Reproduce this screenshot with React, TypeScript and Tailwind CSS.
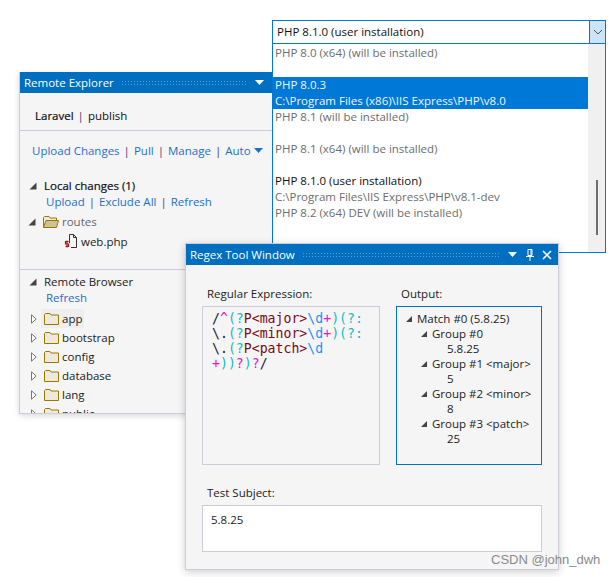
import React from "react";

const sans = "font-['Open_Sans','Noto_Sans',sans-serif]";

function Expanded({ className = "" }: { className?: string }) {
  return (
    <svg width="8" height="8" viewBox="0 0 8 8" className={"shrink-0 " + className}>
      <path d="M7.5 0.5V7.5H0.5Z" fill="#444" />
    </svg>
  );
}

function Collapsed() {
  return (
    <svg width="6" height="10" viewBox="0 0 6 10" className="shrink-0">
      <path d="M0.5 0.8L5.2 5L0.5 9.2Z" fill="#fff" stroke="#777" />
    </svg>
  );
}

function Folder({ fill = "#efe9dc", stroke = "#9a7800" }: { fill?: string; stroke?: string }) {
  return (
    <svg width="15" height="12" viewBox="0 0 15 12" className="shrink-0">
      <path d="M0.5 11.5V1.5L1.5 0.5H6L7 2H14.5V11.5Z" fill={fill} stroke={stroke} />
    </svg>
  );
}

function OpenFolder() {
  return (
    <svg width="16" height="12" viewBox="0 0 16 12" className="shrink-0">
      <path d="M0.5 11.5V1.5L1.5 0.5H6L7 2H13.5V4" fill="#efe9dc" stroke="#9a7800" />
      <path d="M0.5 11.5L3 4.5H15.5L13.5 11.5Z" fill="#cfc298" stroke="#9a7800" />
    </svg>
  );
}

function PhpFile() {
  return (
    <svg width="13" height="15" viewBox="0 0 13 15" className="shrink-0">
      <path d="M5.5 9V0.5H9.5L12.5 3.5V13.5H7" fill="#f5f5f5" stroke="#333" />
      <path d="M9.5 0.5V3.5H12.5" fill="none" stroke="#333" />
      <path d="M4.5 7.5H1.5V10H4.5V12.5H1.5M3 6.5V13.5" fill="none" stroke="#b01010" strokeWidth="1.2" />
    </svg>
  );
}

function Sep() {
  return <span className="text-[#4a3a78] mx-[4px]">|</span>;
}

function Link({ children }: { children: React.ReactNode }) {
  return <span className="text-[#1e6fc8]">{children}</span>;
}

function TitleDots() {
  return (
    <div className="flex-1 h-[6px] mx-[7px] bg-[image:radial-gradient(#5f9fd6_0.7px,transparent_0.8px)] bg-[size:3px_3px]" />
  );
}

function Row({ children, gray = false, sel = false, black = false }: { children?: React.ReactNode; gray?: boolean; sel?: boolean; black?: boolean }) {
  return (
    <div
      className={
        "h-[16px] leading-[16px] pl-[2px] whitespace-nowrap " +
        (sel ? "bg-[#0078d7] text-[#f0f6fc]" : black ? "text-[#111]" : gray ? "text-[#6d6d6d]" : "")
      }
    >
      {children}
    </div>
  );
}

function Tree({ name, hover = false }: { name: string; hover?: boolean }) {
  return (
    <div className="h-[19px] flex items-center pl-[11px] text-[#222]">
      <Collapsed />
      <span className={"ml-[4px] pl-[3px] flex items-center h-[19px] pr-[2px] " + (hover ? "bg-[#eeeeee]" : "")}>
        <span className="mr-[3px] flex items-center">
          <Folder />
        </span>
        <span>{name}</span>
      </span>
    </div>
  );
}

function OutNode({ label, value }: { label: string; value: string }) {
  return (
    <>
      <div className="h-[15px] flex items-center pl-[23px]">
        <Expanded className="scale-[0.85]" />
        <span className="ml-[4px]">{label}</span>
      </div>
      <div className="h-[15px] leading-[15px] pl-[50px]">{value}</div>
    </>
  );
}

const C = ({ c, children }: { c: string; children: React.ReactNode }) => <span style={{ color: c }}>{children}</span>;
const cy = "#12bcc4";
const re = "#7a0a14";
const bl = "#1e90ff";
const ma = "#ee11c8";
const dk = "#202040";

export default function App() {
  return (
    <div className={"relative w-[615px] h-[577px] bg-white overflow-hidden text-[11.5px] " + sans}>
      {/* Remote Explorer */}
      <div className="absolute left-[19px] top-[72px] w-[253px] h-[342px] bg-[#f5f5f5] border-b border-l border-[#ccccdb] shadow-[0_2px_6px_rgba(0,0,0,0.15)] flex flex-col overflow-hidden">
        <div className="h-[21px] shrink-0 bg-[#006fc0] text-white flex items-center pl-[4px] pr-[8px]">
          <span>Remote Explorer</span>
          <TitleDots />
          <svg width="9" height="5" viewBox="0 0 9 5"><path d="M0 0H9L4.5 5Z" fill="#fff" /></svg>
        </div>
        <div className="h-[38px] shrink-0 border-b border-[#ccccdb] pt-[14px] pl-[15px] leading-[17px] text-[#111]">
          <span className="[-webkit-text-stroke:0.2px_#111]">Laravel</span>
          <Sep />
          <span>publish</span>
        </div>
        <div className="pt-[11px] pl-[12px] leading-[17px] h-[41px] shrink-0 whitespace-nowrap">
          <Link>Upload Changes</Link>
          <Sep />
          <Link>Pull</Link>
          <Sep />
          <Link>Manage</Link>
          <Sep />
          <Link>Auto</Link>
          <svg width="9" height="5" viewBox="0 0 9 5" className="inline ml-[3px] mb-[2px]"><path d="M0 0H9L4.5 5Z" fill="#1e6fc8" /></svg>
        </div>
        <div className="h-[16px] pl-[9px] flex items-center shrink-0 mt-[6px] text-[#111]">
          <Expanded />
          <span className="ml-[7px] [-webkit-text-stroke:0.2px_#111]">Local changes (1)</span>
        </div>
        <div className="h-[16px] leading-[15px] pl-[26px] shrink-0 whitespace-nowrap">
          <Link>Upload</Link>
          <Sep />
          <Link>Exclude All</Link>
          <Sep />
          <Link>Refresh</Link>
        </div>
        <div className="h-[20px] pl-[8px] flex items-center shrink-0 mt-[2px] text-[#666]">
          <Expanded />
          <span className="ml-[7px] mr-[3px]"><OpenFolder /></span>
          <span>routes</span>
        </div>
        <div className="h-[19px] pl-[44px] flex items-center shrink-0 text-[#222]">
          <PhpFile />
          <span className="ml-[4px]">web.php</span>
        </div>
        <div className="h-[19px] shrink-0 border-b border-[#ccccdb]" />
        <div className="h-[16px] pl-[9px] flex items-center shrink-0 mt-[4px] text-[#222]">
          <Expanded />
          <span className="ml-[7px]">Remote Browser</span>
        </div>
        <div className="h-[16px] leading-[15px] pl-[26px] shrink-0 mb-[3px]">
          <Link>Refresh</Link>
        </div>
        <Tree name="app" hover />
        <Tree name="bootstrap" />
        <Tree name="config" />
        <Tree name="database" />
        <Tree name="lang" />
        <Tree name="public" />
      </div>

      {/* PHP dropdown */}
      <div className="absolute left-[272px] top-[20px] w-[334px] h-[233px] bg-white border-x border-b border-[#0078d7] flex flex-col">
        <div className="h-[24px] -mx-px shrink-0 border border-[#0078d7] flex">
          <div className="flex-1 pl-[4px] leading-[21px] text-[#111]">PHP 8.1.0 (user installation)</div>
          <div className="w-[16px] border-l border-[#0078d7] bg-[#cce4f7] flex items-center justify-center">
            <svg width="10" height="6" viewBox="0 0 10 6"><path d="M1 1L5 5L9 1" fill="none" stroke="#555" /></svg>
          </div>
        </div>
        <div className="flex flex-1 min-h-0">
          <div className="flex-1 pt-[1px]">
            <Row gray>PHP 8.0 (x64) (will be installed)</Row>
            <Row />
            <Row sel>PHP 8.0.3</Row>
            <Row sel>C:\Program Files (x86)\IIS Express\PHP\v8.0</Row>
            <Row gray>PHP 8.1 (will be installed)</Row>
            <Row />
            <Row gray>PHP 8.1 (x64) (will be installed)</Row>
            <Row />
            <Row black>PHP 8.1.0 (user installation)</Row>
            <Row gray>C:\Program Files\IIS Express\PHP\v8.1-dev</Row>
            <Row gray>PHP 8.2 (x64) DEV (will be installed)</Row>
          </div>
          <div className="w-[17px] shrink-0 bg-[#f0f0f0] flex justify-center pt-[136px]">
            <div className="w-[2px] h-[55px] bg-[#6e6e6e]" />
          </div>
        </div>
      </div>

      {/* Regex window */}
      <div className="absolute left-[185px] top-[243px] w-[374px] h-[327px] bg-[#f5f5f5] border border-[#ccccdb] shadow-[0_2px_8px_rgba(0,0,0,0.2)] flex flex-col">
        <div className="h-[21px] shrink-0 bg-[#006fc0] text-white flex items-center pl-[4px] pr-[6px]">
          <span>Regex Tool Window</span>
          <TitleDots />
          <svg width="9" height="5" viewBox="0 0 9 5" className="mr-[8px]"><path d="M0 0H9L4.5 5Z" fill="#fff" /></svg>
          <svg width="10" height="12" viewBox="0 0 10 12" className="mr-[7px]"><path d="M3 0.5H7V6.5H3ZM1 7.5H9M5 7.5V12M6 1V6" fill="none" stroke="#fff" /></svg>
          <svg width="10" height="10" viewBox="0 0 10 10"><path d="M1 1L9 9M9 1L1 9" fill="none" stroke="#fff" strokeWidth="1.5" /></svg>
        </div>
        <div className="flex-1 flex flex-col px-[16px] pt-[21px]">
          <div className="flex gap-[16px]">
            <div className="w-[178px]">
              <div className="h-[20px] leading-[15px] pl-[5px] text-[#222]">Regular Expression:</div>
              <div className="h-[159px] border border-[#ccccdb] px-[9px] pt-[4px] font-['DejaVu_Sans_Mono','Liberation_Mono',monospace] text-[13.2px] leading-[15px] whitespace-nowrap">
                <div>
                  <C c={dk}>/</C><C c={ma}>^</C><C c={cy}>(?</C><C c={re}>P&lt;major&gt;</C><C c={bl}>\d</C><C c={ma}>+</C><C c={cy}>)(?:</C>
                </div>
                <div>
                  <C c={dk}>\.</C><C c={cy}>(?</C><C c={re}>P&lt;minor&gt;</C><C c={bl}>\d</C><C c={ma}>+</C><C c={cy}>)(?:</C>
                </div>
                <div>
                  <C c={dk}>\.</C><C c={cy}>(?</C><C c={re}>P&lt;patch&gt;</C><C c={bl}>\d</C>
                </div>
                <div>
                  <C c={ma}>+</C><C c={cy}>))</C><C c={ma}>?</C><C c={cy}>)</C><C c={ma}>?</C><C c={dk}>/</C>
                </div>
              </div>
            </div>
            <div className="w-[146px]">
              <div className="h-[20px] leading-[15px] pl-[5px] text-[#222]">Output:</div>
              <div className="h-[159px] border border-[#0072c6] pt-[4px] text-[#222] whitespace-nowrap">
                <div className="h-[15px] flex items-center pl-[8px]">
                  <Expanded className="scale-[0.85]" />
                  <span className="ml-[4px]">Match #0 (5.8.25)</span>
                </div>
                <OutNode label="Group #0" value="5.8.25" />
                <OutNode label="Group #1 <major>" value="5" />
                <OutNode label="Group #2 <minor>" value="8" />
                <OutNode label="Group #3 <patch>" value="25" />
              </div>
            </div>
          </div>
          <div className="h-[20px] leading-[15px] pl-[5px] mt-[20px] text-[#222]">Test Subject:</div>
          <div className="h-[47px] border border-[#ccccdb] bg-white pl-[8px] pt-[5px] leading-[17px] text-[#222]">5.8.25</div>
        </div>
      </div>

      {/* Watermark */}
      <div className="absolute left-[491px] top-[552px] text-[#8a8a8a] text-[13px] leading-[16px] font-['Liberation_Sans',sans-serif] whitespace-nowrap">
        CSDN @john_dwh
      </div>
    </div>
  );
}
